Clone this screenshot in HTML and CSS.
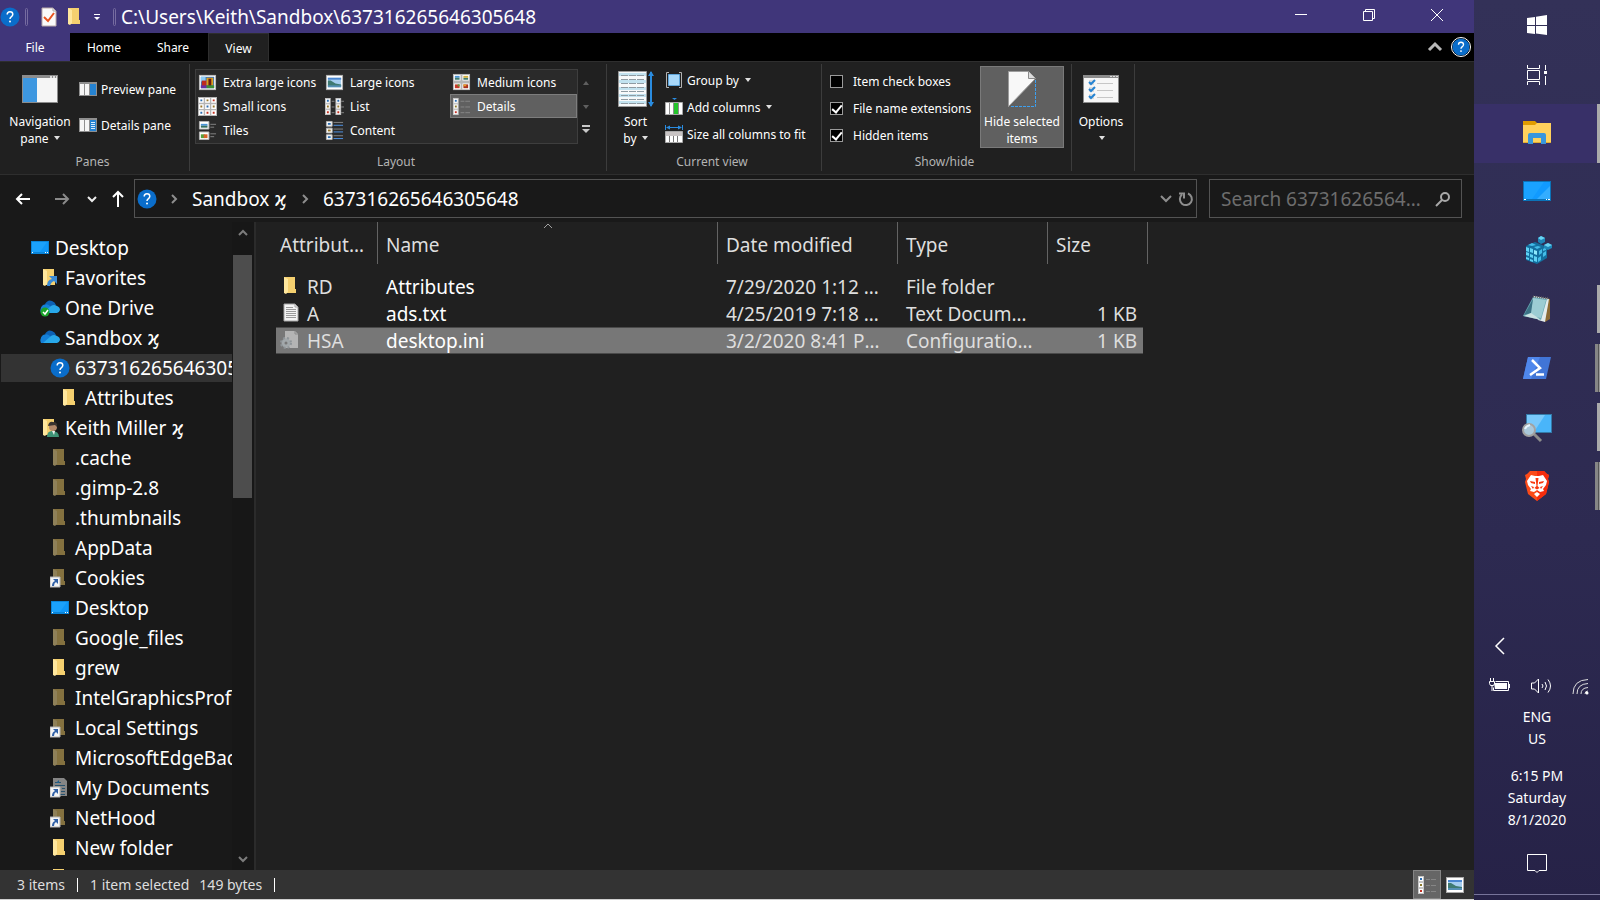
FILE: index.html
```html
<!DOCTYPE html>
<html lang="en">
<head>
    <meta charset="UTF-8">
    <meta name="viewport" content="width=device-width, initial-scale=1.0">
    <title>C:\Users\Keith\Sandbox\637316265646305648</title>
    <link rel="stylesheet" href="styles.css">
</head>
<body>
    <!-- shared icons -->
    <svg class="sprite" aria-hidden="true">
        <symbol id="i-folder" viewBox="0 0 20 20">
            <path d="M3 1h11v12h1v4H5z" fill="#f5d06f"/>
            <path d="M3 1l4 2v13l-2 2-2-1z" fill="#ffe79d"/>
        </symbol>
        <symbol id="i-folder-dim" viewBox="0 0 20 20">
            <path d="M3 1h11v12h1v4H5z" fill="#84713f"/>
            <path d="M3 1l4 2v13l-2 2-2-1z" fill="#8e8059"/>
        </symbol>
        <symbol id="i-link" viewBox="0 0 20 20">
            <path d="M0 9h10v10H0z" fill="#f4f4f4"/>
            <path d="M0 9h10v10H0z" fill="none" stroke="#b5b5b5"/>
            <path d="M3 11h5v5l-2-2q-2 1-2 4H2q0-4 3-5z" fill="#2f5fa5"/>
        </symbol>
        <symbol id="i-desktop" viewBox="0 0 20 20">
            <path d="M1 3h18v13H1z" fill="#0a84d8"/>
            <path d="M2 4h16v10H2z" fill="#1ba1fb"/>
            <path d="M10 14l7-10h1v10z" fill="#0f97f8"/>
            <path d="M2 14h1v1H2zM15 14h1v1h-1zM17 14h1v1h-1z" fill="#fff"/>
        </symbol>
        <symbol id="i-cloud" viewBox="0 0 20 20">
            <path d="M5 6q3-5 7-3 3 1 4 4l-7 4z" fill="#0d62b5"/>
            <path d="M1 15q-2-5 2-8 4-2 7 1l5 7z" fill="#1480d8"/>
            <path d="M3 15l8-7q3-2 6 0 3 1 3 4-1 3-3 3z" fill="#28a8ea"/>
        </symbol>
        <symbol id="i-help" viewBox="0 0 20 20">
            <circle cx="10" cy="10" r="9.5" fill="#0a6dca"/>
            <path d="M7.200 7.500q0-2.800 2.800-2.800t2.800 2.600q0 1.500-1.600 2.500-1.200.8-1.200 2.200" fill="none" stroke="#fff" stroke-width="1.500"/>
            <circle cx="10" cy="14.500" r="1" fill="#fff"/>
        </symbol>
        <symbol id="i-doc" viewBox="0 0 20 20">
            <path d="M3 1h11l3 3v14H3z" fill="#f3f3f3"/>
            <path d="M3 1h11l3 3v14H3zM14 1v3h3" fill="none" stroke="#a5a5a5"/>
            <path d="M5 4.500h7M5 6.500h10M5 8.500h10M5 10.500h10M5 12.500h10M5 14.500h10" stroke="#9a9a9a"/>
        </symbol>
        <symbol id="i-picture" viewBox="0 0 20 20">
            <path d="M1 2h18v16H1z" fill="#a9a9a9"/>
            <path d="M2 3h16v14H2z" fill="#fff"/>
            <path d="M3 5h14v10H3z" fill="#a5cdf0"/>
            <path d="M3 5h14v2H3z" fill="#4a86d0"/>
            <path d="M3 8l3 0 5 3 6 1v2H3z" fill="#3f7a72"/>
            <path d="M3 13h14v2H3z" fill="#5590b5"/>
        </symbol>
        <symbol id="i-details" viewBox="0 0 20 20">
            <path d="M1 1h6v18H1z" fill="#c6c6c6"/>
            <path d="M2 2h4v4H2zM2 8h4v4H2zM2 14h4v4H2z" fill="#fff"/>
            <path d="M3 3h2v2H3z" fill="#2d6fb5"/>
            <path d="M3 9h2v2H3z" fill="#8b7a2c"/>
            <path d="M3 15h2v2H3z" fill="#c33125"/>
            <path d="M9 4.500h4m1 0h5M9 10.500h4m1 0h5M9 16.500h4m1 0h5" stroke="#868686"/>
        </symbol>
    </svg>

    <main class="window">
        <header class="titlebar">
            <svg class="app-icon" viewBox="0 0 20 20"><use href="#i-help"/></svg>
            <span class="grip"></span>
            <button class="quick" aria-label="Properties">
                <svg width="16" height="20" viewBox="0 0 16 20">
                    <path d="M1 1h11l3 3v15H1z" fill="#fafafa" stroke="#b9a9a9"/>
                    <path d="M12 1v3h3" fill="none" stroke="#aaa"/>
                    <path d="M3 10l4 4 6-8" fill="none" stroke="#e8541f" stroke-width="2"/>
                </svg>
            </button>
            <button class="quick" aria-label="New folder">
                <svg width="20" height="20"><use href="#i-folder"/></svg>
            </button>
            <button class="quick" aria-label="Customize toolbar">
                <svg width="8" height="8" viewBox="0 0 8 8"><path d="M1 4h6L4 7z" fill="#fff"/><path d="M1 1.500h6" stroke="#fff"/></svg>
            </button>
            <span class="grip"></span>
            <h1 class="title">C:\Users\Keith\Sandbox\637316265646305648</h1>
            <div class="controls">
                <button aria-label="Minimize"><svg width="14" height="14" viewBox="0 0 14 14"><path d="M1 6.500h12"/></svg></button>
                <button aria-label="Restore"><svg width="14" height="14" viewBox="0 0 14 14"><path d="M1.500 3.500h9v9h-9zM3.500 3V1.500h9v9H11"/></svg></button>
                <button aria-label="Close"><svg width="14" height="14" viewBox="0 0 14 14"><path d="M1 1l12 12M13 1L1 13"/></svg></button>
            </div>
        </header>

        <nav class="tabs">
            <button class="tab tab-file">File</button>
            <button class="tab tab-home">Home</button>
            <button class="tab">Share</button>
            <button class="tab active">View</button>
            <button class="tab-icon" aria-label="Collapse ribbon">
                <svg width="16" height="16" viewBox="0 0 16 16"><path d="M2 11l6-6 6 6" fill="none" stroke="#b8b8b8" stroke-width="3"/></svg>
            </button>
            <button class="tab-icon" aria-label="Help">
                <svg class="help-ring" width="20" height="20"><use href="#i-help"/></svg>
            </button>
        </nav>

        <section class="ribbon">
            <div class="group group-panes">
                <div class="group-body">
                    <button class="big">
                        <svg width="36" height="36" viewBox="0 0 36 36">
                            <path d="M0 4h36v28H0z" fill="#8c8c8c"/>
                            <path d="M28 5h2v2h-2zM31 5h2v2h-2zM34 5h1v2h-1z" fill="#ddd"/>
                            <path d="M1 7h14v24H1z" fill="#3d97e0"/>
                            <path d="M15 7h20v24H15z" fill="#f5f5f5"/>
                        </svg>
                        <span>Navigation<br>pane <i class="caret"></i></span>
                    </button>
                    <div class="stack stack-panes">
                        <button class="small">
                            <svg width="18" height="18" viewBox="0 0 18 18"><path d="M0 2h18v14H0z" fill="#8f8f8f"/><path d="M1 4h4v11H1zM6 4h4v11H6z" fill="#f5f5f5"/><path d="M11 4h6v11h-6z" fill="#2583d2"/></svg>
                            Preview pane
                        </button>
                        <button class="small">
                            <svg width="18" height="18" viewBox="0 0 18 18"><path d="M0 2h18v14H0z" fill="#8f8f8f"/><path d="M1 4h4v11H1zM6 4h4v11H6z" fill="#f5f5f5"/><path d="M11 4h6v11h-6z" fill="#2583d2"/><path d="M12 6.500h4m-4 2h4m-4 2h4m-4 2h4" stroke="#d8ecff"/></svg>
                            Details pane
                        </button>
                    </div>
                </div>
                <h2>Panes</h2>
            </div>

            <div class="group group-layout">
                <div class="group-body">
                    <div class="gallery">
                        <button>
                            <svg viewBox="0 0 20 20"><path d="M1 2h18v16H1z" fill="#b5b5b5"/><path d="M2 3h16v14H2z" fill="#fff"/><path d="M3 4h14v12H3z" fill="#3b74b9"/><path d="M3 4h5v5H3z" fill="#8ccaf3"/><path d="M4 8h5v6H4z" fill="#c02a20"/><path d="M3 13h6v3H3z" fill="#6830a0"/><path d="M9 5h7v8H9z" fill="#dca11e"/><path d="M11 6h3v8h-3z" fill="#6a1c14"/><path d="M9 13h8v3H9z" fill="#3d8e33"/></svg>
                            Extra large icons
                        </button>
                        <button><svg><use href="#i-picture"/></svg>Large icons</button>
                        <button>
                            <svg viewBox="0 0 20 20"><path d="M1 1h18v17H1z" fill="#b5b5b5"/><path d="M2 2h7v6H2zM11 2h7v6h-7zM2 11h7v6H2zM11 11h7v6h-7z" fill="#fff"/><path d="M3 3h5v2H3z" fill="#4a94d8"/><path d="M3 5h5v2H3zM12 5h5v2h-5z" fill="#427c6c"/><path d="M12 3h5v2h-5z" fill="#d3b03d"/><path d="M3 12h5v4H3z" fill="#c63a28"/><path d="M6 12h2v2H6z" fill="#55a23e"/><path d="M12 12h5v4h-5z" fill="#a8301f"/><path d="M12 12h3v2h-3z" fill="#e6a02a"/></svg>
                            Medium icons
                        </button>
                        <button>
                            <svg viewBox="0 0 20 20"><path d="M0 0h20v20H0z" fill="#b5b5b5"/><path d="M1 1h5v5H1zM7.500 1h5v5h-5zM14 1h5v5h-5zM1 7.500h5v5H1zM7.500 7.500h5v5h-5zM14 7.500h5v5h-5zM1 14h5v5H1zM7.500 14h5v5h-5zM14 14h5v5h-5z" fill="#fff"/><path d="M2.500 2.500h2v2h-2zM9 9h2v2H9zM2.500 15.500h2v2h-2z" fill="#2c6db0"/><path d="M9 2.500h2v2H9zM2.500 9h2v2h-2zM15.500 9h2v2h-2z" fill="#98772b"/><path d="M15.500 2.500h2v2h-2zM9 15.500h2v2H9zM15.500 15.500h2v2h-2z" fill="#c2301f"/></svg>
                            Small icons
                        </button>
                        <button>
                            <svg viewBox="0 0 20 20"><path d="M0 1h6v18H0zM11 1h6v18h-6z" fill="#c0c0c0"/><path d="M1 2h4v4H1zM1 8h4v4H1zM1 14h4v4H1zM12 2h4v4h-4zM12 8h4v4h-4zM12 14h4v4h-4z" fill="#fff"/><path d="M2 3h2v2H2zM13 3h2v2h-2z" fill="#2c6db0"/><path d="M2 9h2v2H2zM13 9h2v2h-2z" fill="#98772b"/><path d="M2 15h2v2H2zM13 15h2v2h-2z" fill="#c2301f"/><path d="M7 4.500h3m-3 6h3m-3 6h3M17 4.500h3m-3 6h3m-3 6h3" stroke="#868686"/></svg>
                            List
                        </button>
                        <button class="selected"><svg><use href="#i-details"/></svg>Details</button>
                        <button>
                            <svg viewBox="0 0 20 20"><path d="M1.500.5h10v8h-10zM1.500 11.500h10v8h-10z" fill="#fff" stroke="#b5b5b5"/><path d="M3 3h7v2H3z" fill="#4a94d8"/><path d="M3 5h7v2H3z" fill="#35705f"/><path d="M3 14h4v4H3z" fill="#55a23e"/><path d="M6 14h4v4H6z" fill="#d8652a"/><path d="M13 3.500h6m-6 3h4M13 13.500h6m-6 3h4" stroke="#868686"/></svg>
                            Tiles
                        </button>
                        <button>
                            <svg viewBox="0 0 20 20"><path d="M1.500.5h6v5h-6zM1.500 7.500h6v5h-6zM1.500 14.500h6v5h-6z" fill="#fff" stroke="#b5b5b5"/><path d="M3 2h3v2H3z" fill="#2c6db0"/><path d="M3 9h3v2H3z" fill="#98772b"/><path d="M3 16h3v2H3z" fill="#2c6db0"/><path d="M9 4.500h10M9 11.500h10M9 18.500h10" stroke="#4f96ec"/><path d="M9 1.500h10M9 8.500h10M9 15.500h10" stroke="#868686"/></svg>
                            Content
                        </button>
                    </div>
                    <div class="gallery-scroll">
                        <button aria-label="Scroll up"><svg width="6" height="4"><path d="M0 4l3-4 3 4z" fill="#5f5f5f"/></svg></button>
                        <button aria-label="Scroll down"><svg width="6" height="4"><path d="M0 0h6L3 4z" fill="#5f5f5f"/></svg></button>
                        <button aria-label="More"><svg width="8" height="8"><path d="M0 0h8v2H0zM0 4h8L4 8z" fill="#c8c8c8"/></svg></button>
                    </div>
                </div>
                <h2>Layout</h2>
            </div>

            <div class="group group-current">
                <div class="group-body">
                    <button class="big big-sort">
                        <svg width="36" height="36" viewBox="0 0 36 36">
                            <path d="M.5.5h28v35H.5z" fill="#f7f9fa" stroke="#9b9b9b"/>
                            <path d="M1 3.500h27M1 10.500h27M1 17.500h27M1 24.500h27M1 31.500h27" stroke="#c2e2ef" stroke-width="3"/>
                            <path d="M3 4.500h23M3 8.500h23M3 12.500h23M3 16.500h23M3 20.500h23M3 24.500h23M3 28.500h23M3 32.500h23" stroke="#8f9ba2" stroke-dasharray="7 1"/>
                            <path d="M33 1v34" stroke="#2a8ce0" stroke-width="2"/>
                            <path d="M30 5l3-5 3 5zM30 31l3 5 3-5z" fill="#2a8ce0"/>
                        </svg>
                        <span>Sort<br>by <i class="caret"></i></span>
                    </button>
                    <div class="stack stack-current">
                        <button class="small">
                            <svg width="18" height="18" viewBox="0 0 18 18"><path d="M4 1.500H1.500v15H4M14 1.500h2.500v15H14" fill="none" stroke="#b3b3b3"/><path d="M3.500 3.500h11v11h-11z" fill="#a8d8fa" stroke="#5fa5da"/></svg>
                            Group by <i class="caret"></i>
                        </button>
                        <button class="small">
                            <svg width="18" height="18" viewBox="0 0 18 18"><path d="M7 0h5L9.500 2z" fill="#2a8ce0"/><path d="M.5 4.500h17v12H.5z" fill="#fff" stroke="#a9a9a9"/><path d="M9 5h4v11H9z" fill="#25c52c"/><path d="M4.500 5v11M8.500 5v11M13.500 5v11" stroke="#8f8f8f"/></svg>
                            Add columns <i class="caret"></i>
                        </button>
                        <button class="small">
                            <svg width="18" height="18" viewBox="0 0 18 18"><path d="M.5 0v5M17.500 0v5M2 2.500h14" stroke="#2a8ce0"/><path d="M1 2.500l4-2v4zM17 2.500l-4-2v4z" fill="#2a8ce0"/><path d="M.5 6.500h17v11H.5z" fill="#fff" stroke="#a9a9a9"/><path d="M1 7h16v4H1z" fill="#c8c3c3"/><path d="M4.500 11v6M8.500 11v6M12.500 11v6" stroke="#777"/></svg>
                            Size all columns to fit
                        </button>
                    </div>
                </div>
                <h2>Current view</h2>
            </div>

            <div class="group group-show">
                <div class="group-body">
                    <div class="stack stack-checks">
                        <label><input type="checkbox">Item check boxes</label>
                        <label><input type="checkbox" checked>File name extensions</label>
                        <label><input type="checkbox" checked>Hidden items</label>
                    </div>
                    <button class="big big-hide">
                        <svg width="28" height="36" viewBox="0 0 28 36">
                            <path d="M.5.5h20l7 7L.5 35.500z" fill="#f8f8f8" stroke="#9d9d9d"/>
                            <path d="M20.500.5v7h7" fill="#ddd" stroke="#8a8a8a"/>
                            <path d="M27.500 9v26.500H2" fill="none" stroke="#3da0f0" stroke-dasharray="3 1"/>
                        </svg>
                        <span>Hide selected<br>items</span>
                    </button>
                </div>
                <h2>Show/hide</h2>
            </div>

            <div class="group group-options">
                <div class="group-body">
                    <button class="big">
                        <svg width="36" height="36" viewBox="0 0 36 36">
                            <path d="M0 4h36v28H0z" fill="#8c8c8c"/>
                            <path d="M27 5h2v1h-2zM30 5h2v1h-2zM33 5h2v1h-2z" fill="#ddd"/>
                            <path d="M1 7h34v24H1z" fill="#f6f6f6"/>
                            <path d="M6 9h5v5H6zM6 16h5v5H6zM6 23h5v5H6z" fill="#dcdcdc"/>
                            <path d="M6 11l2 2 4-4M6 18l2 2 4-4M6 25l2 2 4-4" fill="none" stroke="#2583d2" stroke-width="2"/>
                            <path d="M14 12.500h16M14 19.500h16M14 26.500h16" stroke="#c6c6c6"/>
                        </svg>
                        <span>Options<br><i class="caret"></i></span>
                    </button>
                </div>
            </div>
        </section>

        <section class="navbar">
            <div class="arrows">
                <button aria-label="Back"><svg width="16" height="14" viewBox="0 0 16 14"><path d="M15 7H2M7 2L2 7l5 5" stroke="#fff"/></svg></button>
                <button aria-label="Forward"><svg width="16" height="14" viewBox="0 0 16 14"><path d="M1 7h13M9 2l5 5-5 5" stroke="#8a8a8a"/></svg></button>
                <button aria-label="Recent locations" class="recent"><svg width="10" height="8" viewBox="0 0 10 8"><path d="M1 2l4 4 4-4" stroke="#eee"/></svg></button>
                <button aria-label="Up" class="up"><svg width="14" height="18" viewBox="0 0 14 18"><path d="M7 17V2M2 7l5-5 5 5" stroke="#fff"/></svg></button>
            </div>
            <div class="address">
                <svg class="address-icon" width="20" height="20"><use href="#i-help"/></svg>
                <svg class="crumb-arrow" width="8" height="10" viewBox="0 0 8 10"><path d="M2 1l4 4-4 4"/></svg>
                <a href="#">Sandbox <span class="kai">ϗ</span></a>
                <svg class="crumb-arrow" width="8" height="10" viewBox="0 0 8 10"><path d="M2 1l4 4-4 4"/></svg>
                <a href="#">637316265646305648</a>
                <button class="history" aria-label="Previous locations"><svg width="12" height="8" viewBox="0 0 12 8"><path d="M1 1l5 5 5-5"/></svg></button>
                <button class="refresh" aria-label="Refresh"><svg width="16" height="16" viewBox="0 0 16 16"><path d="M10 2.500A6 6 0 1 1 4 3.500M1 2.500h5v5"/></svg></button>
            </div>
            <label class="search">
                <input type="text" aria-label="Search" placeholder="Search 637316265646305648">
                <svg width="16" height="16" viewBox="0 0 16 16"><circle cx="10" cy="6" r="4"/><path d="M7 9l-6 6"/></svg>
            </label>
        </section>

        <section class="content">
            <aside class="sidebar">
                <ul class="tree">
                    <li><a href="#"><svg><use href="#i-desktop"/></svg>Desktop</a></li>
                    <li class="level-1"><a href="#"><svg><use href="#i-folder"/><path d="M9 8h8v8l-3-3q-3 1-4 5H7q0-6 5-7z" fill="#3a8ad6"/></svg>Favorites</a></li>
                    <li class="level-1"><a href="#"><svg><use href="#i-cloud"/><circle cx="5" cy="14" r="4.500" fill="#1aa32a"/><path d="M3 14l2 2 3-4" fill="none" stroke="#fff" stroke-width="1.500"/></svg>One Drive</a></li>
                    <li class="level-1"><a href="#"><svg><use href="#i-cloud"/></svg>Sandbox&nbsp;<span class="kai">ϗ</span></a></li>
                    <li class="level-2 current"><a href="#"><svg><use href="#i-help"/></svg>637316265646305648</a></li>
                    <li class="level-3"><a href="#"><svg><use href="#i-folder"/></svg>Attributes</a></li>
                    <li class="level-1"><a href="#"><svg><use href="#i-folder"/><path d="M7 19q0-6 5-6 7 0 7 6z" fill="#3f9376"/><path d="M12 13l2 4 1-4z" fill="#eee"/><circle cx="13" cy="9" r="4" fill="#b58a6a"/><path d="M8 8q1-5 5-4 5 0 4 5l-2-2z" fill="#3b3430"/></svg>Keith Miller&nbsp;<span class="kai">ϗ</span></a></li>
                    <li class="level-2"><a href="#"><svg><use href="#i-folder-dim"/></svg>.cache</a></li>
                    <li class="level-2"><a href="#"><svg><use href="#i-folder-dim"/></svg>.gimp-2.8</a></li>
                    <li class="level-2"><a href="#"><svg><use href="#i-folder-dim"/></svg>.thumbnails</a></li>
                    <li class="level-2"><a href="#"><svg><use href="#i-folder-dim"/></svg>AppData</a></li>
                    <li class="level-2"><a href="#"><svg><use href="#i-folder-dim"/><use href="#i-link"/></svg>Cookies</a></li>
                    <li class="level-2"><a href="#"><svg><use href="#i-desktop"/></svg>Desktop</a></li>
                    <li class="level-2"><a href="#"><svg><use href="#i-folder-dim"/></svg>Google_files</a></li>
                    <li class="level-2"><a href="#"><svg><use href="#i-folder"/></svg>grew</a></li>
                    <li class="level-2"><a href="#"><svg><use href="#i-folder-dim"/></svg>IntelGraphicsProfiles</a></li>
                    <li class="level-2"><a href="#"><svg><use href="#i-folder-dim"/><use href="#i-link"/></svg>Local Settings</a></li>
                    <li class="level-2"><a href="#"><svg><use href="#i-folder-dim"/></svg>MicrosoftEdgeBackups</a></li>
                    <li class="level-2"><a href="#"><svg><path d="M3 0h11l3 3v15H3z" fill="#858585"/><path d="M5 4.500h6m-6 3h10m-3 3h3m-4 3h4m-5 3h5" stroke="#27526e"/><path d="M6 5l3-3v3z" fill="#1d5f8c"/><use href="#i-link"/></svg>My Documents</a></li>
                    <li class="level-2"><a href="#"><svg><use href="#i-folder-dim"/><use href="#i-link"/></svg>NetHood</a></li>
                    <li class="level-2"><a href="#"><svg><use href="#i-folder"/></svg>New folder</a></li>
                    <li class="level-2"><a href="#" aria-label="Folder"><svg><use href="#i-folder"/></svg></a></li>
                </ul>
                <div class="scrollbar" aria-hidden="true">
                    <svg width="10" height="8" viewBox="0 0 10 8"><path d="M1 6l4-4 4 4"/></svg>
                    <div class="thumb"></div>
                    <svg width="10" height="8" viewBox="0 0 10 8"><path d="M1 2l4 4 4-4"/></svg>
                </div>
            </aside>

            <div class="files">
                <table>
                    <colgroup>
                        <col class="col-attr"><col class="col-name"><col class="col-date"><col class="col-type"><col class="col-size"><col class="col-end">
                    </colgroup>
                    <thead>
                        <tr>
                            <th>Attributes</th>
                            <th class="sorted">Name<svg width="10" height="6" viewBox="0 0 10 6"><path d="M1 5l4-4 4 4"/></svg></th>
                            <th>Date modified</th>
                            <th>Type</th>
                            <th class="no-line">Size</th>
                            <th></th>
                        </tr>
                    </thead>
                    <tbody>
                        <tr>
                            <td class="attr"><svg><use href="#i-folder"/></svg>RD</td>
                            <td class="name">Attributes</td>
                            <td class="date">7/29/2020 1:12 PM</td>
                            <td class="type">File folder</td>
                            <td class="size"></td>
                        </tr>
                        <tr>
                            <td class="attr"><svg><use href="#i-doc"/></svg>A</td>
                            <td class="name">ads.txt</td>
                            <td class="date">4/25/2019 7:18 PM</td>
                            <td class="type">Text Document</td>
                            <td class="size">1 KB</td>
                        </tr>
                        <tr class="selected">
                            <td class="attr"><svg><path d="M4 1h10l3 3v14H4z" fill="#b4b4b4"/><path d="M14 1v3h3" fill="none" stroke="#8a8a8a"/><circle cx="5" cy="13" r="3" fill="#777" stroke="#a2a8ab" stroke-width="3"/><circle cx="5" cy="13" r="5" fill="none" stroke="#8f9599" stroke-width="2" stroke-dasharray="2 2"/></svg>HSA</td>
                            <td class="name">desktop.ini</td>
                            <td class="date">3/2/2020 8:41 PM</td>
                            <td class="type">Configuration settings</td>
                            <td class="size">1 KB</td>
                        </tr>
                    </tbody>
                </table>
            </div>
        </section>

        <footer class="status">
            <span class="count">3 items</span>
            <span class="chosen">1 item selected</span>
            <span class="bytes">149 bytes</span>
            <div class="views">
                <button class="selected" aria-label="Details view"><svg width="20" height="20"><use href="#i-details"/></svg></button>
                <button aria-label="Large icons view"><svg width="20" height="20"><use href="#i-picture"/></svg></button>
            </div>
        </footer>
    </main>

    <aside class="taskbar">
        <button class="task task-start" aria-label="Start">
            <svg width="20" height="20" viewBox="0 0 20 20"><path d="M0 3l8-1v8H0zM9 1.800L20 0v10H9zM0 11h8v8l-8-1zM9 11h11v9L9 18.500z" fill="#fff"/></svg>
        </button>
        <button class="task task-start" aria-label="Task View">
            <svg width="20" height="20" viewBox="0 0 20 20"><path d="M.5 0v3.500h12V0M.5 5.500h12v9H.5zM.5 20v-3.500h12V20M18.500 0v5M18.500 11v9" fill="none" stroke="#fff"/><path d="M17 6h3v3h-3z" fill="#fff"/></svg>
        </button>
        <button class="task active" aria-label="File Explorer">
            <svg width="28" height="28" viewBox="0 0 28 28"><path d="M0 3h12l2 2v3H0z" fill="#e09c00"/><path d="M0 7h12l2-2h14v20H0z" fill="#ffd15c"/><path d="M5 26V17q0-2 2-2h14q2 0 2 2v9h-5v-6h-8v6z" fill="#3996dc"/><path d="M0 24.500h5M23 24.500h5M10 24.500h8" stroke="#e3ae31"/></svg>
        </button>
        <button class="task" aria-label="Desktop">
            <svg width="28" height="28" viewBox="0 0 28 28"><path d="M0 4h28v20H0z" fill="#0b73b8"/><path d="M1 5h26v17H1z" fill="#1aa2ff"/><path d="M9 22L21 5h6v17z" fill="#119aff"/><path d="M14 22L27 9v13z" fill="#34adff"/><path d="M1 22h2v1H1zM23 22h1v1h-1zM25 22h2v1h-2z" fill="#fff"/></svg>
        </button>
        <button class="task" aria-label="Registry Editor">
            <svg width="28" height="28" viewBox="0 0 28 28">
                <path d="M3 10l9-4 12 5v11l-10 6-11-4z" fill="#136f9f"/>
                <path d="M3 11l3 1v4l-3-1zM7 12l3 1v4l-3-1zM3 16l3 1v3l-3-1zM7 18l3 1v3l-3-1zM3 21l3 1v2l-3-1zM7 23l3 1v2l-3-1zM11 20l3 1v5l-3-1z" fill="#5fd2f4"/>
                <path d="M5 9l4-2 4 2-4 1zM11 11l4-1 3 1-4 2zM16 15l3-2v4l-3 2zM20 17l3-2v4l-3 2zM15 22l3-2v4l-3 2zM20 13l3-2v3l-3 1z" fill="#44bce8"/>
                <path d="M11 14l3 1v4l-3-1z" fill="#8de8fb"/>
                <path d="M15 2l3-2 4 2v4l-4 2-3-2z" fill="#1e86b8"/><path d="M15 2l3-2 4 2-4 2z" fill="#69d4f3"/>
                <path d="M21 9l4-2 4 2v3l-4 2-4-2z" fill="#1e86b8"/><path d="M21 9l4-2 4 2-4 2z" fill="#69d4f3"/>
            </svg>
        </button>
        <button class="task running" aria-label="Notepad">
            <svg width="28" height="28" viewBox="0 0 28 28"><path d="M12 2l15 2v20l-5 3z" fill="#8a6a34"/><path d="M11 1l15 3-4 23-7-2z" fill="#e3ecec"/><path d="M10 2l14 2-6 21-18-4z" fill="#69a9b4"/><path d="M10 3l13 2-5 18-11-2z" fill="#9ccdd3"/><path d="M10 4L1 20l7-2z" fill="#3b7285"/><path d="M1 21l7-3 10 7z" fill="#cbe2e2"/><path d="M10 1.500l16 2" stroke="#666" stroke-width="2" stroke-dasharray="1 1"/></svg>
        </button>
        <button class="task running many" aria-label="PowerShell">
            <svg width="28" height="28" viewBox="0 0 28 28"><path d="M5 3h23l-5 22H0z" fill="#4175d6"/><path d="M5 3h12L8 25H0z" fill="#4f87ec"/><path d="M9 6l8 8-10 7" fill="none" stroke="#fff" stroke-width="2.500"/><path d="M13 20.500h8" stroke="#fff" stroke-width="2.500"/></svg>
        </button>
        <button class="task running" aria-label="Desktop Search">
            <svg width="30" height="28" viewBox="0 0 30 28"><path d="M4 1h26v19H4z" fill="#347aa8"/><path d="M5 2h24v17H5z" fill="#49b5fa"/><path d="M5 2h18L12 19H5z" fill="#7ac9fb"/><path d="M12 21l7 7" stroke="#8c8c8c" stroke-width="3"/><circle cx="7" cy="17" r="6" fill="#a9c7da" stroke="#a2a2a2" stroke-width="2"/><path d="M3 16q1-3 5-4" fill="none" stroke="#e7f5ff" stroke-width="2"/></svg>
        </button>
        <button class="task running many" aria-label="Brave">
            <svg width="28" height="32" viewBox="0 0 28 32"><path d="M7 1h14l3 3 2 1-1 4 1 3-3 12-9 7-9-7L2 12l1-3-1-4 2-1z" fill="#fb4a18"/><path d="M14 1h7l3 3 2 1-1 4 1 3-3 12-9 7z" fill="#f52c0c"/><path d="M8 5l4 1h4l4-1 4 6-1 4-3 4 1 2-4 1-3-2-3 2-4-1 1-2-3-4-1-4zM11 24l3-2 3 2-3 3z" fill="#fff"/><path d="M7 11l5 1v2l-4-1zM21 11l-5 1v2l4-1zM12.500 8h3l-1 8 2 2-2.500 1.500L11.500 18l2-2zM8 16l3 1-1 2zM20 16l-3 1 1 2z" fill="#f9390f"/></svg>
        </button>

        <div class="tray">
            <button class="more" aria-label="Show hidden icons"><svg width="10" height="18" viewBox="0 0 10 18"><path d="M9 1L1 9l8 8" fill="none" stroke="#fff" stroke-width="1.500"/></svg></button>
            <div class="tray-icons">
                <svg width="22" height="20" viewBox="0 0 22 20"><path d="M6.500 5.500h13v9h-15v-3" fill="none" stroke="#fff"/><path d="M5 7h13v6H6z" fill="#fff"/><path d="M20 8h1v4h-1z" fill="#fff"/><path d="M1.500 2v3M4.500 2v3M.5 5.500h5v2l-1 2h-3l-1-2zM3 9v6" fill="none" stroke="#fff"/></svg>
                <svg width="22" height="20" viewBox="0 0 22 20"><path d="M.5 7v6h3l4 4V3l-4 4zM11 8q2 2 0 4M14 6q3 4 0 8M17 3.500q5 6.500 0 13" fill="none" stroke="#fff"/></svg>
                <svg width="18" height="20" viewBox="0 0 18 20"><path d="M1 18Q1 4 16 3.500M5 18Q5 8 16 7.500M9 18q0-6 7-6.500M13 18q0-3 3-3" fill="none" stroke="#ddd"/><circle cx="15" cy="17" r="1.500" fill="#fff"/></svg>
            </div>
            <button class="lang">ENG<br>US</button>
            <button class="clock">6:15 PM<br>Saturday<br>8/1/2020</button>
            <button class="notify" aria-label="Notifications"><svg width="20" height="20" viewBox="0 0 20 20"><path d="M.5.5h19v16H12l-2 2-2-2H.5z" fill="none" stroke="#fff"/></svg></button>
        </div>
    </aside>
</body>
</html>
```
FILE: styles.css
```css
* {
    box-sizing: border-box;
}
body {
    margin: 0;
    height: 100vh;
    display: flex;
    overflow: hidden;
    background-color: #202020;
    color: #fff;
    font-family: "Noto Sans", "Open Sans", sans-serif;
    font-size: 12px;
}
button {
    padding: 0;
    border: 0;
    background: none;
    color: inherit;
    font: inherit;
}
a {
    color: inherit;
    text-decoration: none;
}
svg {
    flex: none;
    overflow: visible;
}
.sprite {
    position: absolute;
    width: 0;
    height: 0;
}
.kai {
    font-family: "DejaVu Sans", sans-serif;
}
.window {
    flex: 1;
    min-width: 0;
    display: flex;
    flex-direction: column;
    border-bottom: 1px solid #d0d0d0;
}

/* title bar */
.titlebar {
    flex: none;
    display: flex;
    align-items: center;
    height: 33px;
    background-color: #40367a;
}
.app-icon {
    width: 20px;
    height: 20px;
}
.grip {
    width: 3px;
    height: 18px;
    margin-left: 5px;
    border: 1px solid #766ca0;
    border-radius: 2px;
}
.quick {
    display: flex;
    margin-left: 13px;
}
.quick + .quick {
    margin-left: 8px;
}
.titlebar .quick + .grip {
    margin-left: 12px;
}
.title {
    margin: 0 0 0 5px;
    font-size: 19px;
    font-weight: normal;
    white-space: nowrap;
}
.controls {
    display: flex;
    align-self: stretch;
    margin: 0 3px 0 auto;
}
.controls button {
    width: 68px;
}
.controls path {
    fill: none;
    stroke: #fff;
}

/* tabs */
.tabs {
    flex: none;
    display: flex;
    height: 28px;
    background-color: #000;
}
.tab {
    width: 70px;
}
.tab-file {
    background-color: #40367a;
}
.tab.active {
    width: 61px;
    height: 29px;
    background-color: #202020;
    border: 1px solid #2e2e2e;
    border-bottom: 0;
}
.tab-home {
    width: 68px;
}
.tab-icon {
    display: flex;
    align-items: center;
    margin-right: 3px;
}
.active + .tab-icon {
    margin: 0 8px 0 auto;
}
.help-ring {
    border: 1px solid #fff;
    border-radius: 50%;
}

/* ribbon */
.ribbon {
    flex: none;
    display: flex;
    height: 114px;
    padding: 2px 0 3px;
    background-color: #202020;
    border-top: 1px solid #2e2e2e;
    border-bottom: 1px solid #2e2e2e;
}
.group {
    display: flex;
    flex-direction: column;
    border-right: 1px solid #3c3c3c;
}
.group-panes {
    width: 190px;
}
.group-layout {
    width: 417px;
}
.group-current {
    width: 215px;
}
.group-show {
    width: 250px;
}
.group-options {
    width: 63px;
}
.group h2 {
    margin: 0;
    padding-right: 4px;
    color: #b4b4b4;
    font-size: 12px;
    font-weight: normal;
    line-height: 18px;
    text-align: center;
}
.group-body {
    display: flex;
    height: 91px;
}
.big {
    display: flex;
    flex-direction: column;
    align-items: center;
    gap: 6px;
    width: 79px;
    height: 85px;
    padding-top: 7px;
    line-height: 17px;
    white-space: nowrap;
}
.group-panes .big {
    padding-left: 1px;
}
.big-sort {
    width: 58px;
    padding-right: 1px;
}
.big-hide {
    width: 84px;
    height: 82px;
    margin: 2px 7px 0 auto;
    padding-top: 4px;
    background-color: #606060;
    border: 1px solid #7a7a7a;
}
.group-options .big {
    width: 58px;
}
.caret {
    display: inline-block;
    border: 3px solid transparent;
    border-top: 4px solid #e0e0e0;
    border-bottom: 0;
    vertical-align: 3px;
    margin-left: 2px;
}
.stack {
    display: flex;
    flex-direction: column;
}
.small {
    display: flex;
    align-items: center;
    gap: 4px;
    height: 18px;
    white-space: nowrap;
}
.stack-panes {
    gap: 18px;
    padding-top: 16px;
}
.stack-current {
    gap: 9px;
    padding-top: 7px;
}
.stack-checks {
    gap: 9px;
    padding: 8px 0 0 8px;
}
.stack-checks label {
    display: flex;
    align-items: center;
    height: 18px;
    white-space: nowrap;
}
.stack-checks input {
    appearance: none;
    display: grid;
    place-items: center;
    width: 13px;
    height: 13px;
    margin: 0 10px 0 0;
    background-color: #000;
    border: 1px solid #9a9a9a;
}
.stack-checks input:checked::before {
    content: "";
    width: 4px;
    height: 8px;
    margin-bottom: 2px;
    border: solid #fff;
    border-width: 0 2px 2px 0;
    transform: rotate(40deg);
}
.gallery {
    display: grid;
    grid-template-columns: repeat(3, 127px);
    grid-auto-rows: 24px;
    height: 75px;
    margin: 5px 0 0 5px;
    background-color: #2a2a2a;
    border: 1px solid #3e3e3e;
}
.gallery button {
    display: flex;
    align-items: center;
    gap: 6px;
    padding-left: 1px;
    border: 1px solid transparent;
    white-space: nowrap;
}
.gallery svg {
    width: 19px;
    height: 19px;
}
.gallery .selected {
    background-color: #606060;
    border-color: #7d7d7d;
}
.gallery-scroll {
    display: flex;
    flex-direction: column;
    width: 16px;
    margin-top: 4px;
}
.gallery-scroll button {
    height: 24px;
}

/* navigation bar */
.navbar {
    flex: none;
    display: flex;
    height: 47px;
    padding: 4px 12px 4px 0;
    background-color: #191919;
}
.arrows {
    display: flex;
    align-items: center;
    width: 134px;
    padding-left: 15px;
}
.arrows button {
    display: flex;
    margin-right: 23px;
}
.arrows button + button {
    margin-right: 17px;
}
.arrows button.recent {
    margin-right: 14px;
}
.arrows button.up {
    margin: 0;
}
.arrows path {
    fill: none;
    stroke-width: 2;
}
.address {
    flex: 1;
    display: flex;
    align-items: center;
    min-width: 0;
    padding: 0 2px;
    border: 1px solid #535353;
    font-size: 19px;
    white-space: nowrap;
}
.address-icon {
    margin-right: 13px;
}
.address a {
    margin: 0 14px;
}
.address path {
    fill: none;
    stroke: #8e8e8e;
    stroke-width: 2;
}
.history {
    display: flex;
    margin: 0 6px 0 auto;
}
.refresh {
    display: flex;
}
.search {
    display: flex;
    align-items: center;
    width: 253px;
    margin-left: 12px;
    padding: 0 10px 0 11px;
    border: 1px solid #535353;
}
.search input {
    flex: 1;
    min-width: 0;
    margin-right: 12px;
    padding: 0;
    border: 0;
    background: none;
    color: #fff;
    font: inherit;
    font-size: 19px;
    text-overflow: ellipsis;
}
.search input::placeholder {
    color: #6d6d6d;
}
.search svg {
    fill: none;
    stroke: #a8a8a8;
    stroke-width: 2;
}

/* tree */
.content {
    flex: 1;
    display: flex;
    min-height: 0;
    overflow: hidden;
}
.sidebar {
    flex: none;
    display: flex;
    width: 256px;
    background-color: #191919;
    border-right: 2px solid #2b2b2b;
}
.tree {
    flex: 1;
    min-width: 0;
    margin: 0;
    padding: 11px 0 0 1px;
    overflow: hidden;
    list-style: none;
    font-size: 19px;
}
.tree li {
    height: 30px;
    padding: 1px 0 1px 29px;
    overflow: hidden;
}
.tree a {
    display: flex;
    align-items: center;
    height: 28px;
    white-space: nowrap;
}
.tree svg {
    width: 20px;
    height: 20px;
    margin-right: 5px;
}
.tree .level-1 {
    padding-left: 39px;
}
.tree .level-2 {
    padding-left: 49px;
}
.tree .level-3 {
    padding-left: 59px;
}
.tree .current {
    background: linear-gradient(#333, #333) 0 1px / 100% 28px no-repeat;
}
.scrollbar {
    flex: none;
    display: flex;
    flex-direction: column;
    align-items: center;
    width: 22px;
    padding: 7px 2px 7px 1px;
    background-color: #171717;
}
.scrollbar path {
    fill: none;
    stroke: #7c7c7c;
    stroke-width: 2;
}
.thumb {
    width: 19px;
    height: 243px;
    margin: 18px 0 auto;
    background-color: #4d4d4d;
}

/* file list */
.files {
    flex: 1;
    min-width: 0;
    padding-left: 20px;
}
table {
    table-layout: fixed;
    width: 872px;
    border-collapse: separate;
    border-spacing: 0;
    font-size: 19px;
    color: #dedede;
}
.col-attr {
    width: 102px;
}
.col-name {
    width: 340px;
}
.col-date {
    width: 180px;
}
.col-type {
    width: 150px;
}
.col-size {
    width: 95px;
}
.col-end {
    width: 5px;
}
th {
    height: 42px;
    padding: 3px 12px 0 8px;
    border-right: 1px solid #636363;
    overflow: hidden;
    font-weight: normal;
    text-align: left;
    text-overflow: ellipsis;
    white-space: nowrap;
}
th:first-child {
    padding-left: 4px;
}
th:last-child {
    padding: 0;
}
th.no-line {
    border-right: 0;
}
th.sorted {
    position: relative;
}
th.sorted svg {
    position: absolute;
    top: 1px;
    left: calc(50% - 5px);
    fill: none;
    stroke: #a0a0a0;
}
tbody::before {
    content: "";
    display: block;
    height: 9px;
}
td {
    height: 27px;
    padding: 2px 8px 0;
    border: solid transparent;
    border-width: 1px 0;
    line-height: 23px;
    overflow: hidden;
    text-overflow: ellipsis;
    white-space: nowrap;
}
td.attr {
    padding-left: 5px;
}
td.attr svg {
    width: 20px;
    height: 20px;
    margin-right: 6px;
    vertical-align: top;
}
td.name {
    color: #fff;
}
td.date {
    padding-right: 18px;
}
td.type {
    padding-right: 13px;
}
td.size {
    padding-right: 6px;
    text-align: right;
}
.selected td {
    background-color: #777;
    border-color: #4a4a4a;
}

/* status bar */
.status {
    flex: none;
    display: flex;
    align-items: center;
    height: 29px;
    padding-left: 17px;
    background-color: #333;
    color: #dedede;
    font-size: 14px;
}
.count,
.bytes {
    padding-right: 12px;
    border-right: 1px solid #fff;
    line-height: 14px;
}
.count {
    margin-right: 12px;
}
.chosen {
    margin-right: 10px;
}
.views {
    display: flex;
    align-self: stretch;
    margin-left: auto;
}
.views button {
    display: grid;
    place-items: center;
    width: 28px;
    border: 1px solid transparent;
}
.views button + button {
    margin-right: 5px;
}
.views .selected {
    background-color: #666;
    border-color: #858585;
}

/* taskbar */
.taskbar {
    flex: none;
    display: flex;
    flex-direction: column;
    width: 126px;
    padding-bottom: 5px;
    background: linear-gradient(#333158, #2d2a51 60%, #262247);
}
.task {
    display: grid;
    place-items: center;
    height: 59px;
    padding: 0 0 3px 3px;
    border-right: 3px solid transparent;
}
.task-start {
    height: 50px;
    padding-bottom: 0;
}
.task-start + .task-start {
    height: 54px;
    padding-bottom: 5px;
}
.task.active {
    background-color: #383068;
    border-color: #aaa;
}
.task.running {
    border: 0;
    background: linear-gradient(#aaa, #aaa) right 4px / 3px 48px no-repeat;
}
.task.many {
    background: linear-gradient(90deg, #868686 3px, #555 3px, #555 4px, #999 4px) right 4px / 5px 48px no-repeat;
}
.task.running svg {
    margin-right: 3px;
}
.tray {
    flex: 1;
    display: flex;
    flex-direction: column;
    align-items: center;
    justify-content: flex-end;
    border-bottom: 1px solid #77749a;
    font-size: 14px;
    line-height: 22px;
}
.more {
    display: flex;
    align-self: flex-start;
    margin: 0 0 21px 21px;
}
.tray-icons {
    display: flex;
    align-self: stretch;
    justify-content: space-between;
    padding: 0 10px 0 15px;
    margin-bottom: 10px;
}
.clock {
    margin: 15px 0 23px;
}
.notify {
    display: flex;
    margin-bottom: 20px;
}
```
